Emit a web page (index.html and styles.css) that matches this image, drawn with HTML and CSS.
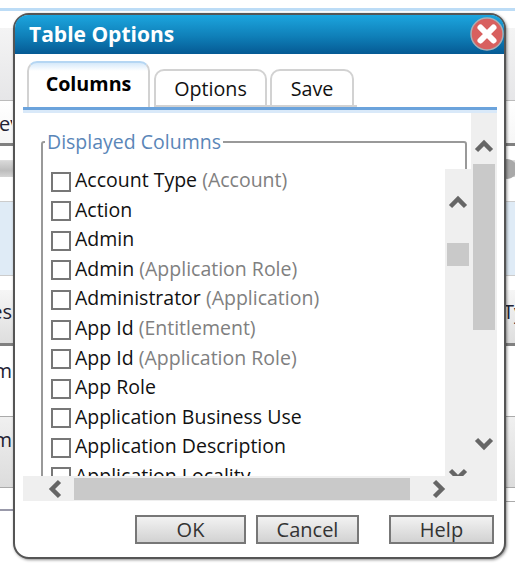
FILE: index.html
```html
<!DOCTYPE html>
<html lang="en">
<head>
<meta charset="utf-8">
<title>Table Options</title>
<link rel="stylesheet" href="styles.css">
</head>
<body>
<div class="page">
  <div class="band b-top"></div>
  <div class="band b-head1"></div>
  <div class="band b-head2"><span class="frag-l">ev</span></div>
  <div class="band b-rule"></div>
  <div class="band b-white1"></div>
  <div class="band b-bar"><span class="knob"></span></div>
  <div class="band b-white2"></div>
  <div class="band b-blue"></div>
  <div class="band b-white3"></div>
  <div class="band b-head3"><span class="frag-l">es</span><span class="frag-r">Ty</span></div>
  <div class="band b-rule"></div>
  <div class="band b-row1"><span class="frag-l">m</span></div>
  <div class="band b-row2"><span class="frag-l">m</span></div>
  <div class="band b-row3"></div>
</div>

<div class="dialog">
  <header class="titlebar">
    <h1>Table Options</h1>
    <svg class="close" width="36" height="36" viewBox="0 0 36 36" aria-label="Close">
      <circle cx="18" cy="18" r="16" fill="#d8605f" stroke="#a9aeb4" stroke-width="1.5"/>
      <path d="M11.500 11.500 24.500 24.500M24.500 11.500 11.500 24.500" stroke="#fff" stroke-width="6" stroke-linecap="round"/>
    </svg>
  </header>

  <nav class="tabs">
    <span class="tab active">Columns</span>
    <span class="tab t-options">Options</span>
    <span class="tab t-save">Save</span>
  </nav>

  <section class="panel">
    <div class="view">
      <fieldset class="group">
        <legend>Displayed Columns</legend>
        <ul class="list">
          <li><i class="box"></i><span>Account Type <em>(Account)</em></span></li>
          <li><i class="box"></i><span>Action</span></li>
          <li><i class="box"></i><span>Admin</span></li>
          <li><i class="box"></i><span>Admin <em>(Application Role)</em></span></li>
          <li><i class="box"></i><span>Administrator <em>(Application)</em></span></li>
          <li><i class="box"></i><span>App Id <em>(Entitlement)</em></span></li>
          <li><i class="box"></i><span>App Id <em>(Application Role)</em></span></li>
          <li><i class="box"></i><span>App Role</span></li>
          <li><i class="box"></i><span>Application Business Use</span></li>
          <li><i class="box"></i><span>Application Description</span></li>
          <li><i class="box"></i><span>Application Locality</span></li>
        </ul>
      </fieldset>
      <div class="vbar inner">
        <svg class="chev up" width="20" height="14" viewBox="0 0 20 14"><path d="M2.500 11.500 10 4l7.500 7.500"/></svg>
        <div class="thumb"></div>
        <svg class="chev down" width="20" height="14" viewBox="0 0 20 14"><path d="M2.500 2.500 10 10l7.500-7.500"/></svg>
      </div>
      <div class="vbar outer">
        <svg class="chev up" width="20" height="14" viewBox="0 0 20 14"><path d="M2.500 11.500 10 4l7.500 7.500"/></svg>
        <div class="thumb"></div>
        <svg class="chev down" width="20" height="14" viewBox="0 0 20 14"><path d="M2.500 2.500 10 10l7.500-7.500"/></svg>
      </div>
    </div>
    <div class="hbar">
      <svg class="chev" width="14" height="20" viewBox="0 0 14 20"><path d="M11.500 2.500 4 10l7.500 7.500"/></svg>
      <div class="hthumb"></div>
      <svg class="chev" width="14" height="20" viewBox="0 0 14 20"><path d="M2.500 2.500 10 10l-7.500 7.500"/></svg>
    </div>
  </section>

  <footer class="actions">
    <button class="btn b-ok">OK</button>
    <button class="btn b-cancel">Cancel</button>
    <button class="btn b-help">Help</button>
  </footer>
</div>
</body>
</html>
```
FILE: styles.css
```css
* { box-sizing: border-box; }
html, body { margin: 0; padding: 0; }
body {
  width: 515px;
  height: 564px;
  overflow: hidden;
  position: relative;
  background: #fff;
  font-family: "Open Sans", sans-serif;
  color: #111;
}

/* page behind the dialog */
.page { display: flex; flex-direction: column; padding-top: 8px; height: 564px; overflow: hidden; }
.band { position: relative; flex: none; font-size: 20px; color: #223; overflow: hidden; }
.b-top { height: 20px; background: linear-gradient(#bcdcf6 0, #bcdcf6 3px, #fff 3px); }
.b-head1 { height: 73px; background: linear-gradient(#f4f4f4, #e6e6e8); border-bottom: 1px solid #bbb; }
.b-head2 { height: 42px; background: linear-gradient(#fff, #f6f6f6); line-height: 46px; }
.b-rule { height: 3px; background: #808080; }
.b-white1 { height: 15px; background: #fff; border-bottom: 1px solid #ddd; }
.b-bar { height: 16px; background: linear-gradient(#d8d8d8, #bdbdbd 60%, #d5d5d5); overflow: visible; z-index: 1; }
.b-white2 { height: 25px; background: #fff; border-bottom: 1px solid #ccc; }
.b-blue { height: 73px; background: #dfebf6; }
.b-white3 { height: 15px; background: #fff; border-top: 1px solid #ccc; }
.b-head3 { height: 53px; background: linear-gradient(#f6f6f6, #dedede); line-height: 43px; }
.b-row1 { height: 71px; background: #fff; line-height: 50px; border-bottom: 1px solid #aaa; }
.b-row2 { height: 71px; background: linear-gradient(#f0f0f0, #dcdcdc); line-height: 46px; border-bottom: 1px solid #aaa; }
.b-row3 { height: 70px; background: #fff; }
.b-row3::before { content: ""; position: absolute; left: 0; top: 21px; width: 13px; height: 2px; background: #99a; }
.b-row3::after { content: ""; position: absolute; right: 0; top: 13px; width: 9px; height: 1px; background: #aaa; }
.frag-l { position: absolute; left: -1px; top: 0; width: 13px; overflow: hidden; white-space: nowrap; }
.b-head3 .frag-l, .b-row1 .frag-l, .b-row2 .frag-l { direction: rtl; }
.frag-r { position: absolute; left: 503px; top: 0; white-space: nowrap; }
.knob { position: absolute; left: 497px; top: -2px; width: 20px; height: 20px; border-radius: 50%; background: #a9a9a9; }

/* dialog window */
.dialog {
  position: absolute;
  left: 13px;
  top: 13px;
  width: 493px;
  height: 546px;
  display: flex;
  flex-direction: column;
  background: #fff;
  border: 2px solid #555;
  border-radius: 16px;
  box-shadow: 1px 1px 3px rgba(0, 0, 0, .45);
  z-index: 2;
}
.titlebar {
  position: relative;
  flex: none;
  height: 39px;
  padding-left: 14px;
  display: flex;
  align-items: center;
  border-radius: 13px 13px 0 0;
  background: linear-gradient(#1ca5de, #0f7fb8 55%, #055a94);
}
.titlebar h1 { margin: 0; font-size: 21px; font-weight: 700; color: #fff; line-height: 1; }
.close { position: absolute; right: -1px; top: 1px; }

/* tabs */
.tabs { flex: none; height: 53px; padding: 7px 0 0 12px; display: flex; align-items: flex-end; position: relative; }
.tab {
  display: flex;
  align-items: center;
  justify-content: center;
  font-size: 19.7px;
  height: 38px;
  background: #fff;
  border: 2px solid #d2d2d2;
  border-radius: 10px 10px 0 0;
}
.tab.active {
  width: 123px;
  height: 46px;
  padding-bottom: 3px;
  font-weight: 700;
  color: #000;
  border-bottom: 0;
  border-top: 2px solid #b5d6f3;
  background: linear-gradient(#d6e9fa, #fff 8px);
  margin-right: 4px;
}
.t-options { width: 113px; margin-right: 3px; }
.t-save { width: 84px; }
.tabs::after {
  content: "";
  position: absolute;
  left: 139px;
  width: 203px;
  bottom: 0;
  height: 2px;
  background: #d2d2d2;
}

/* scrolling panel */
.panel {
  flex: none;
  width: 474px;
  height: 394px;
  margin-left: 8px;
  border-top: 3px solid #6ba3dc;
  padding-top: 3px;
  background: linear-gradient(#d9e9f9 3px, #fff 3px);
  background-clip: padding-box;
  display: flex;
  flex-direction: column;
}
.view { position: relative; flex: none; height: 363px; overflow: hidden; padding: 15px 0 0 18px; }
.group {
  margin: 0;
  padding: 11px 0 0 8px;
  width: 426px;
  height: 400px;
  border: 2px solid #999;
  border-radius: 3px 3px 0 0;
  min-width: 0;
}
.group legend { margin-left: -6px; padding: 0 2px; font-size: 19.5px; line-height: 27px; color: #5a86b8; }
.list { list-style: none; margin: -1px 0 0; padding: 0; }
.list li { display: flex; align-items: center; height: 29.55px; font-size: 19.5px; white-space: pre; color: #111; }
.list em { font-style: normal; color: #808080; }
.box { flex: none; width: 20px; height: 20px; margin-right: 4px; margin-top: 4px; border: 2px solid #777; background: #fff; }

.vbar { position: absolute; background: #efefef; width: 26px; }
.vbar.outer { right: 0; top: 0; bottom: 0; }
.vbar.inner { right: 26px; top: 56px; bottom: 0; }
.vbar .chev { position: absolute; left: 3px; }
.thumb { position: absolute; left: 2px; width: 22px; background: #c9c9c9; }
.outer .thumb { top: 51px; height: 166px; }
.outer .up { top: 26px; }
.outer .down { top: 324px; }
.inner .thumb { top: 74px; height: 23px; }
.inner .up { top: 26px; }
.inner .down { top: 299px; }
.chev path { fill: none; stroke: #666; stroke-width: 4.5; }

.hbar { flex: none; height: 25px; background: #efefef; position: relative; }
.hbar .chev { position: absolute; top: 3px; }
.hbar .chev:first-child { left: 25px; }
.hbar .chev:last-child { left: 409px; }
.hthumb { position: absolute; left: 51px; top: 2px; width: 336px; height: 22px; background: #c9c9c9; }

/* footer */
.actions { flex: none; display: flex; padding: 14px 0 0 120px; }
.btn {
  height: 29px;
  padding: 0;
  font: 20px/1 "Open Sans", sans-serif;
  color: #333;
  background: linear-gradient(#f2f2f2, #d2d2d2);
  border: 2px solid #777;
  border-radius: 0;
}
.b-ok { width: 111px; margin-right: 10px; }
.b-cancel { width: 103px; margin-right: 30px; }
.b-help { width: 105px; }
```
